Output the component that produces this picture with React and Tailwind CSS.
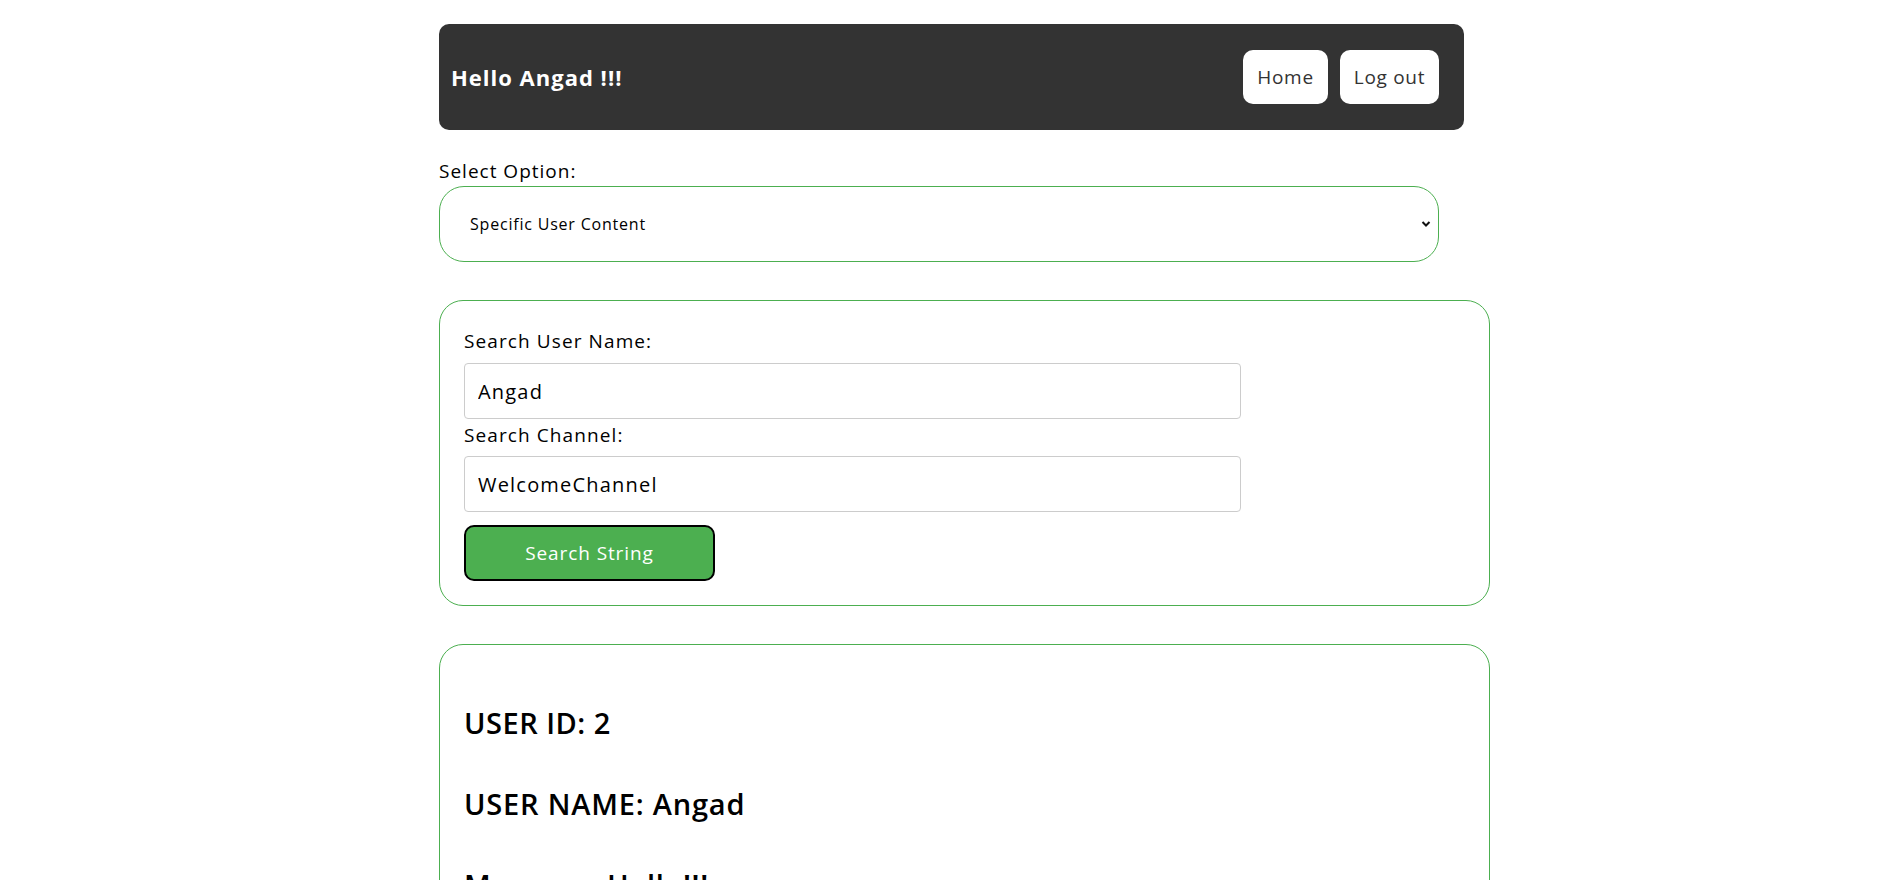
import React from "react";

export default function App() {
  return (
    <div className="min-h-[880px] bg-white text-black font-['Open_Sans',sans-serif]">
      <div className="ml-[439px] pt-[24px] flex flex-col">
        <header className="w-[1025px] h-[106px] bg-[#333333] rounded-[10px] flex items-center justify-between pl-[12px] pr-[25px]">
          <h1 className="text-white font-bold text-[22px] tracking-[1px]">Hello Angad !!!</h1>
          <nav className="flex gap-[12px]">
            <button className="h-[54px] w-[85px] bg-white rounded-[10px] text-[19px] tracking-[0.7px] text-[#333]">Home</button>
            <button className="h-[54px] w-[99px] bg-white rounded-[10px] text-[19px] tracking-[0.7px] text-[#333]">Log out</button>
          </nav>
        </header>

        <label className="mt-[29px] text-[19px] tracking-[1px] leading-[24px] h-[27px]">Select Option:</label>
        <div className="relative w-[1000px]">
          <select className="appearance-none w-full h-[76px] border border-[#4caf50] rounded-[25px] pl-[30px] text-[16px] tracking-[0.8px] bg-white outline-none">
            <option>Specific User Content</option>
          </select>
          <svg className="absolute right-[8px] top-[33px] w-[10px] h-[10px]" viewBox="0 0 10 10" fill="none" stroke="#111" strokeWidth="2">
            <path d="M1.5 3 L5 6.5 L8.5 3" />
          </svg>
        </div>

        <section className="mt-[38px] w-[1051px] h-[306px] border border-[#4caf50] rounded-[24px] pl-[24px] pt-[28px] flex flex-col">
          <label className="text-[19px] tracking-[1.1px] leading-[24px]">Search User Name:</label>
          <input
            readOnly
            value="Angad"
            className="mt-[10px] w-[777px] h-[56px] border border-[#cccccc] rounded-[4px] px-[13px] text-[20px] tracking-[1.2px] outline-none"
          />
          <label className="mt-[4px] text-[19px] tracking-[1.1px] leading-[24px]">Search Channel:</label>
          <input
            readOnly
            value="WelcomeChannel"
            className="mt-[9px] w-[777px] h-[56px] border border-[#cccccc] rounded-[4px] px-[13px] text-[20px] tracking-[1.2px] outline-none"
          />
          <button className="mt-[13px] w-[251px] h-[56px] bg-[#4caf50] border-2 border-black rounded-[10px] text-white text-[19px] tracking-[0.9px]">
            Search String
          </button>
        </section>

        <section className="mt-[38px] w-[1051px] h-[300px] border border-[#4caf50] rounded-[24px] pl-[24px] pt-[61px] flex flex-col gap-[47px]">
          <h3 className="text-[29px] font-semibold leading-[34px] tracking-[0.5px]">USER ID: 2</h3>
          <h3 className="text-[29px] font-semibold leading-[34px] tracking-[0.8px]">USER NAME: Angad</h3>
          <h3 className="text-[29px] font-semibold leading-[34px] tracking-[0.7px]">Message: Hello!!!</h3>
        </section>
      </div>
    </div>
  );
}
